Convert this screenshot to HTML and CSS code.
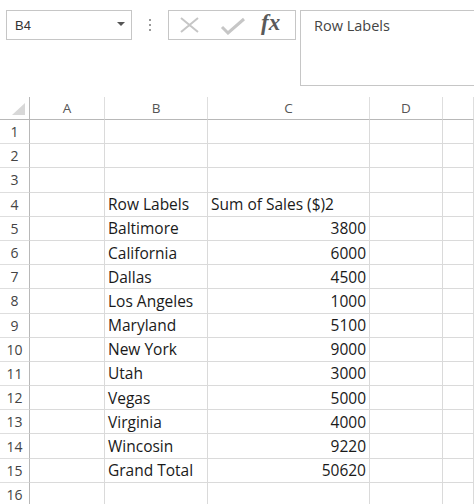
FILE: index.html
```html
<!DOCTYPE html>
<html lang="en">
<head>
    <meta charset="UTF-8">
    <title>Pivot table</title>
    <link rel="stylesheet" href="styles.css">
</head>
<body>
    <div class="formula-row">
        <div class="name-box">
            <span class="name-text">B4</span>
            <span class="name-arrow"></span>
        </div>
        <div class="grip">
            <span></span><span></span><span></span>
        </div>
        <div class="fx-buttons">
            <svg class="btn-cancel" width="24" height="18" viewBox="0 0 24 18">
                <path d="M3 2 L20 16 M20 2 L3 16" stroke="#c6c6c6" stroke-width="2" fill="none"/>
            </svg>
            <svg class="btn-enter" width="26" height="18" viewBox="0 0 26 18">
                <path d="M2 10 L8 16 L24 2" stroke="#c6c6c6" stroke-width="3" fill="none"/>
            </svg>
            <span class="btn-fx">fx</span>
        </div>
        <div class="formula-input">Row Labels</div>
    </div>

    <div class="sheet">
        <div class="corner"><span class="corner-mark"></span></div>
        <div class="col-head">A</div>
        <div class="col-head">B</div>
        <div class="col-head">C</div>
        <div class="col-head">D</div>
        <div class="col-head"></div>

        <div class="row-head">1</div><div class="cell"></div><div class="cell"></div><div class="cell"></div><div class="cell"></div><div class="cell"></div>
        <div class="row-head">2</div><div class="cell"></div><div class="cell"></div><div class="cell"></div><div class="cell"></div><div class="cell"></div>
        <div class="row-head">3</div><div class="cell"></div><div class="cell"></div><div class="cell"></div><div class="cell"></div><div class="cell"></div>
        <div class="row-head">4</div><div class="cell"></div><div class="cell">Row Labels</div><div class="cell">Sum of Sales ($)2</div><div class="cell"></div><div class="cell"></div>
        <div class="row-head">5</div><div class="cell"></div><div class="cell">Baltimore</div><div class="cell num">3800</div><div class="cell"></div><div class="cell"></div>
        <div class="row-head">6</div><div class="cell"></div><div class="cell">California</div><div class="cell num">6000</div><div class="cell"></div><div class="cell"></div>
        <div class="row-head">7</div><div class="cell"></div><div class="cell">Dallas</div><div class="cell num">4500</div><div class="cell"></div><div class="cell"></div>
        <div class="row-head">8</div><div class="cell"></div><div class="cell">Los Angeles</div><div class="cell num">1000</div><div class="cell"></div><div class="cell"></div>
        <div class="row-head">9</div><div class="cell"></div><div class="cell">Maryland</div><div class="cell num">5100</div><div class="cell"></div><div class="cell"></div>
        <div class="row-head">10</div><div class="cell"></div><div class="cell">New York</div><div class="cell num">9000</div><div class="cell"></div><div class="cell"></div>
        <div class="row-head">11</div><div class="cell"></div><div class="cell">Utah</div><div class="cell num">3000</div><div class="cell"></div><div class="cell"></div>
        <div class="row-head">12</div><div class="cell"></div><div class="cell">Vegas</div><div class="cell num">5000</div><div class="cell"></div><div class="cell"></div>
        <div class="row-head">13</div><div class="cell"></div><div class="cell">Virginia</div><div class="cell num">4000</div><div class="cell"></div><div class="cell"></div>
        <div class="row-head">14</div><div class="cell"></div><div class="cell">Wincosin</div><div class="cell num">9220</div><div class="cell"></div><div class="cell"></div>
        <div class="row-head">15</div><div class="cell"></div><div class="cell">Grand Total</div><div class="cell num">50620</div><div class="cell"></div><div class="cell"></div>
        <div class="row-head">16</div><div class="cell"></div><div class="cell"></div><div class="cell"></div><div class="cell"></div><div class="cell"></div>
    </div>
</body>
</html>
```

FILE: styles.css
```css
* {
    margin: 0;
    padding: 0;
    box-sizing: border-box;
}

body {
    width: 474px;
    height: 504px;
    overflow: hidden;
    background: #ffffff;
    font-family: 'Open Sans', 'Liberation Sans', sans-serif;
    color: #1a1a1a;
}

/* formula bar */
.formula-row {
    display: flex;
    align-items: flex-start;
    padding: 10px 0 0 6px;
    height: 97px;
}

.name-box {
    width: 126px;
    height: 30px;
    border: 1px solid #c6c6c6;
    display: flex;
    align-items: center;
    justify-content: space-between;
    padding: 0 6px 0 8px;
}

.name-text {
    font-family: 'Liberation Sans', Arial, sans-serif;
    font-size: 13px;
    color: #333333;
}

.name-arrow {
    width: 0;
    height: 0;
    border-left: 4px solid transparent;
    border-right: 4px solid transparent;
    border-top: 4px solid #555555;
    margin-top: -2px;
}

.grip {
    width: 36px;
    height: 30px;
    display: flex;
    flex-direction: column;
    align-items: center;
    justify-content: center;
    gap: 3px;
}

.grip span {
    width: 2px;
    height: 2px;
    background: #9a9a9a;
}

.fx-buttons {
    width: 128px;
    height: 30px;
    border: 1px solid #c6c6c6;
    display: flex;
    align-items: center;
    padding-left: 9px;
}

.btn-cancel {
    margin-right: 18px;
}

.btn-enter {
    margin-right: 15px;
    margin-top: 2px;
}

.btn-fx {
    font-family: 'Liberation Serif', 'DejaVu Serif', serif;
    font-style: italic;
    font-weight: bold;
    font-size: 23px;
    color: #5a5a5a;
    margin-top: -4px;
}

.formula-input {
    margin-left: 4px;
    flex: 1;
    height: 76px;
    border: 1px solid #c6c6c6;
    border-right: none;
    padding: 5px 0 0 13px;
    font-size: 14.5px;
    color: #444444;
}

/* sheet grid */
.sheet {
    display: grid;
    grid-template-columns: 30px 75px 103px 162px 73px 1fr;
    grid-template-rows: 23px;
    grid-auto-rows: 24.2px;
}

.corner {
    border-right: 1px solid #b8b8b8;
    border-bottom: 1px solid #b8b8b8;
    position: relative;
}

.corner-mark {
    position: absolute;
    right: 4px;
    bottom: 4px;
    width: 0;
    height: 0;
    border-left: 13px solid transparent;
    border-bottom: 12px solid #d8d8d8;
}

.col-head {
    border-right: 1px solid #dedede;
    border-bottom: 1px solid #b8b8b8;
    display: flex;
    align-items: center;
    justify-content: center;
    font-size: 13.5px;
    color: #555555;
}

.row-head {
    border-right: 1px solid #b8b8b8;
    border-bottom: 1px solid #dedede;
    display: flex;
    align-items: center;
    justify-content: center;
    font-size: 14px;
    color: #444444;
}

.cell {
    border-right: 1px solid #dadada;
    border-bottom: 1px solid #dadada;
    display: flex;
    align-items: center;
    padding: 0 3px;
    font-size: 15.5px;
    white-space: nowrap;
    overflow: visible;
}

.num {
    justify-content: flex-end;
}
```
